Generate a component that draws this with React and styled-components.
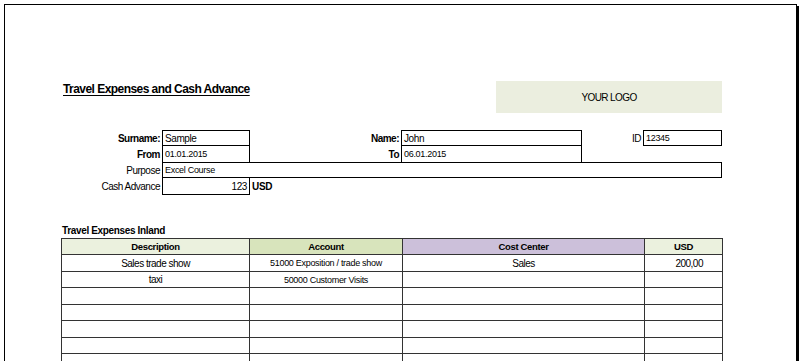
import React from "react";
import styled, { createGlobalStyle } from "styled-components";

const Global = createGlobalStyle`
  html, body { margin: 0; padding: 0; background: #fff; overflow: hidden; }
  body { font-family: "Liberation Sans", Arial, sans-serif; color: #000; }
`;

const Page = styled.div`
  margin: 4px 0 0 4px;
  width: 793px;
  height: 420px;
  box-sizing: border-box;
  border: 1px solid #000;
  box-shadow: 2px 2px 0 #000;
  padding: 76px 0 0 56px;
  background: #fff;
`;

const Content = styled.div`
  width: 661px;
  display: flex;
  flex-direction: column;
`;

const Header = styled.div`
  display: flex;
  justify-content: space-between;
  align-items: flex-start;
`;

const Title = styled.h1`
  margin: 0 0 0 2px;
  font-size: 12px;
  line-height: 14px;
  padding-top: 1px;
  font-weight: bold;
  letter-spacing: -0.55px;
  text-decoration: underline;
  text-underline-offset: 2px;
`;

const LogoBox = styled.div`
  width: 226px;
  height: 32px;
  background: #ebeedf;
  display: flex;
  align-items: center;
  justify-content: center;
  font-size: 10px;
  letter-spacing: -0.6px;
`;

const FormGrid = styled.div`
  margin-top: 17px;
  display: grid;
  grid-template-columns: 101px 88px 151px 181px 61px 79px;
  grid-template-rows: 16px 16px 16px 17px;
`;

const Label = styled.div`
  display: flex;
  align-items: center;
  justify-content: flex-end;
  padding-right: 2px;
  font-size: 10px;
  letter-spacing: -0.5px;
  font-weight: ${(p) => (p.$bold ? "bold" : "normal")};
  grid-column: ${(p) => p.$col};
  grid-row: ${(p) => p.$row};
`;

const Unit = styled.div`
  display: flex;
  align-items: center;
  padding-left: 2px;
  font-size: 10px;
  font-weight: bold;
  letter-spacing: -0.3px;
  grid-column: ${(p) => p.$col};
  grid-row: ${(p) => p.$row};
`;

const Field = styled.div`
  box-sizing: border-box;
  display: flex;
  align-items: center;
  justify-content: ${(p) => (p.$right ? "flex-end" : "flex-start")};
  padding: 0 2px;
  font-size: ${(p) => p.$size || 10}px;
  letter-spacing: ${(p) => (p.$size === 9 ? "-0.3px" : "-0.4px")};
  grid-column: ${(p) => p.$col};
  grid-row: ${(p) => p.$row};
  border-left: 1px solid #000;
  border-right: 1px solid #000;
  border-top: ${(p) => (p.$noTop ? "none" : "1px solid #000")};
  border-bottom: ${(p) => (p.$noBottom ? "none" : "1px solid #000")};
`;

const SectionTitle = styled.h2`
  margin: 30px 0 0 1px;
  font-size: 10px;
  line-height: 12px;
  font-weight: bold;
  letter-spacing: -0.35px;
`;

const Table = styled.table`
  margin-top: 1px;
  width: 661px;
  border-collapse: collapse;
  table-layout: fixed;
`;

const HeadCell = styled.th`
  height: 15px;
  padding: 0;
  border: 1px solid #333;
  background: ${(p) => p.$bg};
  font-size: 9.5px;
  font-weight: bold;
  letter-spacing: -0.35px;
  text-align: center;
  vertical-align: middle;
`;

const Cell = styled.td`
  padding: 0 ${(p) => (p.$right ? "19px" : "2px")} 0 2px;
  border: 1px solid #333;
  font-size: ${(p) => p.$size || 10}px;
  letter-spacing: ${(p) => (p.$size === 9 ? "-0.3px" : "-0.5px")};
  text-align: ${(p) => (p.$right ? "right" : "center")};
  vertical-align: middle;
  white-space: nowrap;
`;

const Row = styled.tr`
  height: ${(p) => p.$h}px;
`;

const columns = [
  { label: "Description", width: 188, bg: "#ebf1de" },
  { label: "Account", width: 153, bg: "#d8e4bc" },
  { label: "Cost Center", width: 242, bg: "#ccc0da" },
  { label: "USD", width: 78, bg: "#ebf1de" },
];

const rows = [
  ["Sales trade show", "51000 Exposition / trade show", "Sales", "200,00"],
  ["taxi", "50000 Customer Visits", "", ""],
  ["", "", "", ""],
  ["", "", "", ""],
  ["", "", "", ""],
  ["", "", "", ""],
  ["", "", "", ""],
  ["", "", "", ""],
];

export default function App() {
  return (
    <>
      <Global />
      <Page>
        <Content>
          <Header>
            <Title>Travel Expenses and Cash Advance</Title>
            <LogoBox>YOUR LOGO</LogoBox>
          </Header>

          <FormGrid>
            <Label $col={1} $row={1} $bold>Surname:</Label>
            <Field $col={2} $row={1}>Sample</Field>
            <Label $col={3} $row={1} $bold>Name:</Label>
            <Field $col={4} $row={1}>John</Field>
            <Label $col={5} $row={1}>ID</Label>
            <Field $col={6} $row={1} $size={9}>12345</Field>

            <Label $col={1} $row={2} $bold>From</Label>
            <Field $col={2} $row={2} $size={9} $noTop $noBottom>01.01.2015</Field>
            <Label $col={3} $row={2} $bold>To</Label>
            <Field $col={4} $row={2} $size={9} $noTop $noBottom>06.01.2015</Field>

            <Label $col={1} $row={3}>Purpose</Label>
            <Field $col="2 / 7" $row={3} $size={9}>Excel Course</Field>

            <Label $col={1} $row={4}>Cash Advance</Label>
            <Field $col={2} $row={4} $right $noTop>123</Field>
            <Unit $col={3} $row={4}>USD</Unit>
          </FormGrid>

          <SectionTitle>Travel Expenses Inland</SectionTitle>
          <Table>
            <colgroup>
              {columns.map((c) => (
                <col key={c.label} style={{ width: c.width }} />
              ))}
            </colgroup>
            <thead>
              <tr>
                {columns.map((c) => (
                  <HeadCell key={c.label} $bg={c.bg}>{c.label}</HeadCell>
                ))}
              </tr>
            </thead>
            <tbody>
              {rows.map((r, i) => (
                <Row key={i} $h={i % 2 === 0 ? 17 : 16}>
                  <Cell>{r[0]}</Cell>
                  <Cell $size={9}>{r[1]}</Cell>
                  <Cell>{r[2]}</Cell>
                  <Cell $right>{r[3]}</Cell>
                </Row>
              ))}
            </tbody>
          </Table>
        </Content>
      </Page>
    </>
  );
}
